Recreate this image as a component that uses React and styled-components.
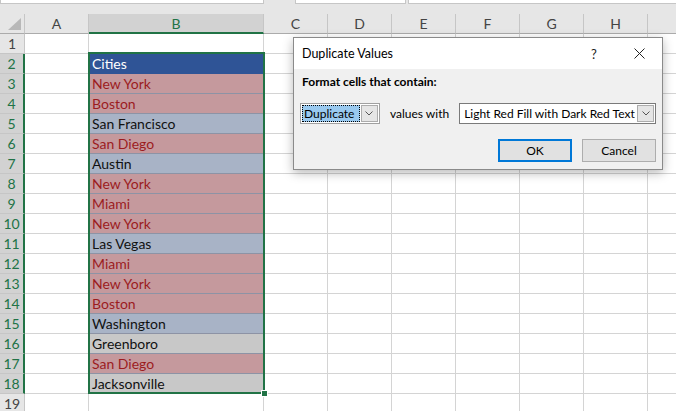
import styled, { createGlobalStyle } from "styled-components"

const GlobalStyle = createGlobalStyle`
  html, body {
    margin: 0;
    padding: 0;
    background: #ffffff;
  }
  body {
    width: 676px;
    height: 411px;
    overflow: hidden;
  }
  * {
    box-sizing: border-box;
  }
`

const GREEN = "#217346"

const Page = styled.div`
  position: relative;
  width: 676px;
  height: 411px;
  overflow: hidden;
  background: #ffffff;
  font-family: Lato, "Liberation Sans", sans-serif;
`

const TopStrip = styled.div`
  display: flex;
  align-items: flex-start;
  height: 14px;
  background: #e6e6e6;
`

const TopBox = styled.div`
  flex: none;
  width: ${(p) => p.$w}px;
  margin-left: ${(p) => p.$ml || 0}px;
  height: 4px;
  background: #ffffff;
  border: 1px solid #c6c6c6;
  border-top: none;
`

const Sheet = styled.div`
  display: grid;
  grid-template-columns: 25px 64px 175px repeat(7, 64px);
  grid-auto-rows: 20px;
  width: 734px;
`

const Corner = styled.div`
  position: relative;
  background: #e6e6e6;
  border-right: 1px solid #c6c6c6;
  border-bottom: 1px solid #ababab;

  svg {
    position: absolute;
    right: 3px;
    bottom: 3px;
  }
`

const ColHead = styled.div`
  display: flex;
  align-items: center;
  justify-content: center;
  font-size: 14px;
  color: ${(p) => (p.$active ? GREEN : "#444444")};
  background: ${(p) => (p.$active ? "#d2d2d2" : "#e6e6e6")};
  border-right: 1px solid #c6c6c6;
  border-bottom: ${(p) => (p.$active ? `2px solid ${GREEN}` : "1px solid #ababab")};
`

const RowHead = styled.div`
  display: flex;
  align-items: center;
  justify-content: center;
  font-size: 14px;
  color: ${(p) => (p.$active ? GREEN : "#444444")};
  background: ${(p) => (p.$active ? "#d2d2d2" : "#e6e6e6")};
  border-bottom: 1px solid #c6c6c6;
  border-right: ${(p) => (p.$active ? `2px solid ${GREEN}` : "1px solid #c6c6c6")};
`

const Cell = styled.div`
  display: flex;
  align-items: center;
  padding-left: 3px;
  font-size: 14px;
  white-space: nowrap;
  overflow: hidden;
  background: #ffffff;
  border-right: 1px solid #d4d4d4;
  border-bottom: 1px solid #d4d4d4;
`

const fills = {
  head: { bg: "#2f5496", fg: "#ffffff", line: "#2f5496" },
  dup: { bg: "#c5999d", fg: "#9c1c1f", line: "#8d93a5" },
  uniq: { bg: "#a8b3c6", fg: "#111111", line: "#8d93a5" },
  plain: { bg: "#c8c8c8", fg: "#111111", line: "#8d93a5" },
}

const CityCell = styled(Cell)`
  background: ${(p) => fills[p.$kind].bg};
  color: ${(p) => fills[p.$kind].fg};
  border-bottom-color: ${(p) => fills[p.$kind].line};
`

const Selection = styled.div`
  position: absolute;
  left: 88px;
  top: 52px;
  width: 177px;
  height: 342px;
  border: 2px solid ${GREEN};
  pointer-events: none;
`

const Handle = styled.div`
  position: absolute;
  left: 261px;
  top: 390px;
  width: 7px;
  height: 7px;
  background: ${GREEN};
  border: 1px solid #ffffff;
`

const Dialog = styled.div`
  position: absolute;
  left: 293px;
  top: 37px;
  width: 370px;
  height: 133px;
  display: flex;
  flex-direction: column;
  background: #f0f0f0;
  border: 1px solid #8a8a8a;
  box-shadow: 0 3px 10px rgba(0, 0, 0, 0.28);
  font-family: Lato, "Noto Sans", sans-serif;
  font-size: 12px;
  color: #000000;
`

const TitleBar = styled.div`
  display: flex;
  align-items: center;
  height: 31px;
  background: #ffffff;
`

const TitleText = styled.div`
  flex: 1;
  padding-left: 8px;
  font-size: 12.5px;
`

const TitleButton = styled.div`
  flex: none;
  width: ${(p) => p.$w}px;
  height: 31px;
  display: flex;
  align-items: center;
  justify-content: center;
  font-size: 13px;
  color: #222222;
`

const Body = styled.div`
  display: flex;
  flex-direction: column;
  padding: 0 6px;
`

const Label = styled.div`
  margin: 5px 0 0 2px;
  height: 16px;
  line-height: 16px;
  font-weight: 700;
`

const FieldRow = styled.div`
  display: flex;
  align-items: center;
  margin-top: 13px;
  height: 21px;
`

const Combo = styled.div`
  display: flex;
  align-items: stretch;
  width: ${(p) => p.$w}px;
  height: 21px;
  padding: 1px;
  background: #ffffff;
  border: 1px solid ${(p) => (p.$focus ? "#a0a0a0" : "#7a7a7a")};
`

const ComboValue = styled.div`
  flex: 1;
  display: flex;
  align-items: center;
  padding-left: ${(p) => (p.$selected ? 1 : 2)}px;
  white-space: nowrap;
  overflow: hidden;
  background: ${(p) => (p.$selected ? "#99c9ef" : "transparent")};
  border: 1px ${(p) => (p.$selected ? "dotted #000000" : "solid transparent")};
  margin-right: 1px;
`

const ComboButton = styled.div`
  flex: none;
  width: 17px;
  display: flex;
  align-items: center;
  justify-content: center;
  background: #e5e5e5;
  border: 1px solid #acacac;
`

const Between = styled.div`
  padding: 0 10px;
  white-space: nowrap;
`

const Buttons = styled.div`
  display: flex;
  justify-content: flex-end;
  gap: 10px;
  margin-top: 15px;
`

const Button = styled.div`
  width: 74px;
  height: 23px;
  display: flex;
  align-items: center;
  justify-content: center;
  background: #e1e1e1;
  border: ${(p) => (p.$default ? "2px solid #0078d7" : "1px solid #adadad")};
`

const Chevron = () => (
  <svg width="8" height="5" viewBox="0 0 8 5">
    <path d="M0.5 0.5 L4 4 L7.5 0.5" fill="none" stroke="#555555" strokeWidth="1" />
  </svg>
)

const CloseIcon = () => (
  <svg width="11" height="11" viewBox="0 0 11 11">
    <path d="M0.5 0.5 L10.5 10.5 M10.5 0.5 L0.5 10.5" stroke="#222222" strokeWidth="1" />
  </svg>
)

const cities = [
  ["Cities", "head"],
  ["New York", "dup"],
  ["Boston", "dup"],
  ["San Francisco", "uniq"],
  ["San Diego", "dup"],
  ["Austin", "uniq"],
  ["New York", "dup"],
  ["Miami", "dup"],
  ["New York", "dup"],
  ["Las Vegas", "uniq"],
  ["Miami", "dup"],
  ["New York", "dup"],
  ["Boston", "dup"],
  ["Washington", "uniq"],
  ["Greenboro", "plain"],
  ["San Diego", "dup"],
  ["Jacksonville", "plain"],
]

// the ninth column sits past the right edge, only its left border shows
const columns = ["A", "B", "C", "D", "E", "F", "G", "H", ""]

const App = () => {
  const rows = []
  for (let r = 1; r <= 19; r++) {
    const city = r >= 2 && r <= 18 ? cities[r - 2] : null
    rows.push(
      <RowHead key={`h${r}`} $active={!!city}>
        {r}
      </RowHead>
    )
    columns.forEach((c, i) => {
      if (c === "B" && city) {
        rows.push(
          <CityCell key={`${i}-${r}`} $kind={city[1]}>
            {city[0]}
          </CityCell>
        )
      } else {
        rows.push(<Cell key={`${i}-${r}`} />)
      }
    })
  }

  return (
    <Page>
      <GlobalStyle />
      <TopStrip>
        <TopBox $w={264} />
        <TopBox $w={111} $ml={31} />
        <TopBox $w={300} $ml={2} />
      </TopStrip>
      <Sheet>
        <Corner>
          <svg width="13" height="12" viewBox="0 0 13 12">
            <polygon points="13,0 13,12 0,12" fill="#b8b8b8" />
          </svg>
        </Corner>
        {columns.map((c, i) => (
          <ColHead key={i} $active={c === "B"}>
            {c}
          </ColHead>
        ))}
        {rows}
      </Sheet>
      <Selection />
      <Handle />

      <Dialog>
        <TitleBar>
          <TitleText>Duplicate Values</TitleText>
          <TitleButton $w={46}>?</TitleButton>
          <TitleButton $w={45}>
            <CloseIcon />
          </TitleButton>
        </TitleBar>
        <Body>
          <Label>Format cells that contain:</Label>
          <FieldRow>
            <Combo $w={80} $focus>
              <ComboValue $selected>Duplicate</ComboValue>
              <ComboButton>
                <Chevron />
              </ComboButton>
            </Combo>
            <Between>values with</Between>
            <Combo $w={197}>
              <ComboValue>Light Red Fill with Dark Red Text</ComboValue>
              <ComboButton>
                <Chevron />
              </ComboButton>
            </Combo>
          </FieldRow>
          <Buttons>
            <Button $default>OK</Button>
            <Button>Cancel</Button>
          </Buttons>
        </Body>
      </Dialog>
    </Page>
  )
}

export default App
